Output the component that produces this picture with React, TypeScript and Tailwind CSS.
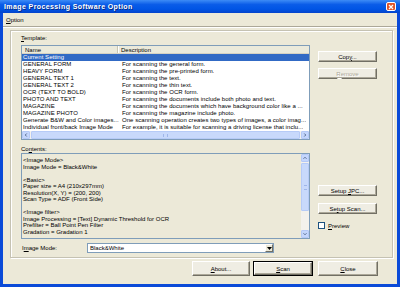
import React from "react";

const rows: [string, string][] = [
  ["Current Setting", ""],
  ["GENERAL FORM", "For scanning the general form."],
  ["HEAVY FORM", "For scanning the pre-printed form."],
  ["GENERAL TEXT 1", "For scanning the text."],
  ["GENERAL TEXT 2", "For scanning the thin text."],
  ["OCR (TEXT TO BOLD)", "For scanning the OCR form."],
  ["PHOTO AND TEXT", "For scanning the documents include both photo and text."],
  ["MAGAZINE", "For scanning the documents which have background color like a ..."],
  ["MAGAZINE PHOTO", "For scanning the magazine include photo."],
  ["Generate B&W and Color images...", "One scanning operation creates two types of images, a color imag..."],
  ["Individual front/back Image Mode", "For example, it is suitable for scanning a driving license that inclu..."],
];

const contents = [
  "<Image Mode>",
  "Image Mode = Black&White",
  "",
  "<Basic>",
  "Paper size = A4 (210x297mm)",
  "Resolution(X, Y) = (200, 200)",
  "Scan Type = ADF (Front Side)",
  "",
  "<Image filter>",
  "Image Processing = [Text] Dynamic Threshold for OCR",
  "Prefilter = Ball Point Pen Filter",
  "Gradation = Gradation 1",
];

function Btn({
  children,
  className = "",
  disabled = false,
  def = false,
}: {
  children: React.ReactNode;
  className?: string;
  disabled?: boolean;
  def?: boolean;
}) {
  return (
    <div className={`${className} ${def ? "border border-[#000000]" : ""} flex`}>
      <div
        className={`flex-1 flex items-center justify-center bg-[#efede3] border-t border-l border-t-white border-l-white border-b border-r border-b-[#716f64] border-r-[#716f64] shadow-[inset_-1px_-1px_0_#aca899] text-[6px] leading-none ${
          disabled ? "text-[#aca899] [text-shadow:1px_1px_0_#ffffff]" : "text-black"
        }`}
      >
        {children}
      </div>
    </div>
  );
}

function ArrowBtn({ dir }: { dir: "l" | "r" | "u" | "d" }) {
  const paths: Record<string, string> = {
    l: "M5 2 L3 4 L5 6",
    r: "M3 2 L5 4 L3 6",
    u: "M2 5 L4 3 L6 5",
    d: "M2 3 L4 5 L6 3",
  };
  return (
    <div className="w-[8px] h-[8px] shrink-0 bg-[#c4d6fc] border border-[#b4c8f6] rounded-[1px] flex items-center justify-center">
      <svg width="8" height="8" viewBox="0 0 8 8">
        <path d={paths[dir]} stroke="#4d6185" strokeWidth="1.2" fill="none" />
      </svg>
    </div>
  );
}

export default function App() {
  return (
    <div className="w-[400px] h-[287px] flex flex-col bg-[#0a4ad8] overflow-hidden font-['Liberation_Sans',Arial,sans-serif]">
      {/* Title bar */}
      <div className="h-[13px] shrink-0 flex items-center justify-between pl-[4px] pr-[4px] bg-[linear-gradient(to_bottom,#3d8cf6,#0a5ce8_35%,#0055e5_70%,#0444cc)]">
        <span className="text-white font-bold text-[7px] leading-none tracking-[0.4px] [text-shadow:1px_1px_0_#0a2a80]">
          Image Processing Software Option
        </span>
        <div className="w-[10px] h-[9px] rounded-[2px] bg-[#e0552b] border border-white flex items-center justify-center">
          <svg width="6" height="6" viewBox="0 0 6 6">
            <path d="M1 1 L5 5 M5 1 L1 5" stroke="white" strokeWidth="1.3" />
          </svg>
        </div>
      </div>

      {/* Body */}
      <div className="flex-1 mx-[3px] mb-[3px] bg-[#ece9d8] flex flex-col">
        {/* Menu */}
        <div className="h-[13px] shrink-0 flex items-center pl-[3px] text-[6px] leading-none text-black">
          <span>
            <span className="underline">O</span>ption
          </span>
        </div>
        <div className="h-[2px] shrink-0 border-t border-t-[#aca899] border-b border-b-white" />

        {/* Frame */}
        <div className="mt-[2px] ml-[7px] w-[383px] h-[228px] shrink-0 border border-[#c5c2b2] shadow-[inset_1px_1px_0_#ffffff,1px_1px_0_#ffffff] flex pl-[10px]">
          {/* Left column */}
          <div className="w-[289px] flex flex-col pt-[3px]">
            <div className="h-[9px] text-[6px] leading-[9px] text-black">
              <span className="underline">T</span>emplate:
            </div>
            {/* List view */}
            <div className="mt-[2px] h-[95px] border border-[#7f9db9] bg-white flex flex-col overflow-hidden">
              <div className="h-[8px] shrink-0 flex bg-[#ebeadb] border-b border-b-[#d6d2c2] text-[6px] leading-[8px] text-black">
                <div className="w-[96px] pl-[3px] border-r border-r-[#c7c5b2] shadow-[1px_0_0_#ffffff]">Name</div>
                <div className="pl-[3px]">Description</div>
              </div>
              <div className="h-[77px] shrink-0 flex flex-col overflow-hidden">
                {rows.map(([n, d], i) => (
                  <div
                    key={i}
                    className={`h-[7px] shrink-0 flex text-[6px] leading-[7px] whitespace-nowrap tracking-[0.05px] ${
                      i === 0 ? "bg-[#316ac5] text-white" : "text-black"
                    }`}
                  >
                    <div className="w-[97px] shrink-0 pl-[1px] overflow-hidden">{n}</div>
                    <div className="pl-[3px] overflow-hidden">{d}</div>
                  </div>
                ))}
              </div>
              {/* h scrollbar */}
              <div className="h-[8px] shrink-0 flex bg-[#f3f1ec]">
                <ArrowBtn dir="l" />
                <div className="flex-1 mx-[1px] bg-[#c8d9fb] border border-[#b6cbf7] rounded-[1px] flex items-center justify-center">
                  <div className="w-[5px] h-[3px] border-x border-[#9fb6ea]" />
                </div>
                <ArrowBtn dir="r" />
              </div>
            </div>

            <div className="mt-[6px] h-[7px] text-[6px] leading-[7px] text-black">
              Co<span className="underline">n</span>tents:
            </div>
            {/* Contents box */}
            <div className="h-[86px] border border-[#7f9db9] bg-[#ece9d8] flex">
              <div className="flex-1 pt-[3px] pl-[1px] text-[6px] leading-[6.5px] text-black whitespace-pre overflow-hidden">
                {contents.map((l, i) => (
                  <div key={i} className="h-[6.5px]">
                    {l}
                  </div>
                ))}
              </div>
              <div className="w-[8px] shrink-0 flex flex-col bg-[#f3f1ec]">
                <ArrowBtn dir="u" />
                <div className="h-[48px] my-[1px] bg-[#c8d9fb] border border-[#b6cbf7] rounded-[1px] flex items-center justify-center">
                  <div className="w-[3px] h-[5px] border-y border-[#9fb6ea]" />
                </div>
                <div className="flex-1" />
                <ArrowBtn dir="d" />
              </div>
            </div>

            {/* Image mode row */}
            <div className="mt-[4px] h-[10px] flex items-center">
              <div className="w-[66px] pl-[1px] text-[6px] leading-none text-black">
                I<span className="underline">m</span>age Mode:
              </div>
              <div className="w-[187px] h-[10px] border border-[#7f9db9] bg-white flex items-center">
                <div className="flex-1 pl-[2px] text-[6px] leading-none text-black">Black&amp;White</div>
                <div className="w-[8px] h-[8px] bg-[#ece9d8] border-t border-l border-t-white border-l-white border-b border-r border-b-[#716f64] border-r-[#716f64] flex items-center justify-center">
                  <svg width="5" height="3" viewBox="0 0 5 3">
                    <path d="M0 0 L5 0 L2.5 3 Z" fill="black" />
                  </svg>
                </div>
              </div>
            </div>
          </div>

          {/* Right column */}
          <div className="ml-[8px] w-[59px] flex flex-col">
            <Btn className="mt-[20px] h-[11px]">
              <span>
                Cop<span className="underline">y</span>...
              </span>
            </Btn>
            <Btn className="mt-[6px] h-[11px]" disabled>
              <span>
                <span className="underline">R</span>emove
              </span>
            </Btn>
            <Btn className="mt-[106px] h-[11px]">
              <span>
                Setup <span className="underline">J</span>PC...
              </span>
            </Btn>
            <Btn className="mt-[7px] h-[11px]">
              <span>
                Se<span className="underline">t</span>up Scan...
              </span>
            </Btn>
            <div className="mt-[8px] flex items-center gap-[3px]">
              <div className="w-[7px] h-[7px] border border-[#1c5180] bg-white" />
              <span className="text-[6px] leading-none text-black">
                <span className="underline">P</span>review
              </span>
            </div>
          </div>
        </div>

        {/* Bottom buttons */}
        <div className="mt-[3px] flex justify-end pr-[19px]">
          <Btn className="w-[58px] h-[15px]">
            <span>
              <span className="underline">A</span>bout...
            </span>
          </Btn>
          <Btn className="ml-[3px] w-[60px] h-[15px]" def>
            <span>
              <span className="underline">S</span>can
            </span>
          </Btn>
          <Btn className="ml-[5px] w-[60px] h-[15px]">
            <span>
              <span className="underline">C</span>lose
            </span>
          </Btn>
        </div>
      </div>
    </div>
  );
}
